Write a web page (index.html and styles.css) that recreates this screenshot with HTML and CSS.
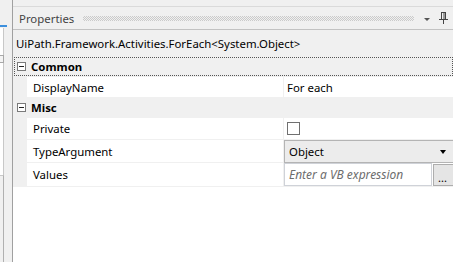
FILE: index.html
```html
<!DOCTYPE html>
<html>
<head>
    <title>Properties</title>
    <meta charset="UTF-8">
    <link rel="stylesheet" href="styles.css">
</head>
<body>
    <div class="side">
        <div class="side-tab"></div>
        <div class="side-doc"><div class="side-box"></div></div>
        <div class="side-rest"></div>
    </div>
    <div class="panel">
        <div class="titlebar">
            <span class="title">Properties</span>
            <span class="grip"></span>
            <span class="menu-arrow"></span>
            <svg class="pin" width="9" height="12" viewBox="0 0 9 12">
                <rect x="2.5" y="0.5" width="4" height="7" fill="none" stroke="#444"/>
                <line x1="0" y1="7.5" x2="9" y2="7.5" stroke="#444"/>
                <line x1="4.5" y1="8" x2="4.5" y2="12" stroke="#444"/>
                <line x1="5" y1="1" x2="5" y2="7" stroke="#444"/>
            </svg>
        </div>
        <div class="header">UiPath.Framework.Activities.ForEach&lt;System.Object&gt;</div>
        <div class="grid">
            <div class="group focused"><span class="toggle"></span>Common</div>
            <div class="row row-display">
                <div class="indent"></div>
                <div class="name">DisplayName</div>
                <div class="value">For each</div>
            </div>
            <div class="group"><span class="toggle"></span>Misc</div>
            <div class="row row-private">
                <div class="indent"></div>
                <div class="name">Private</div>
                <div class="value"><span class="checkbox"></span></div>
            </div>
            <div class="row row-type">
                <div class="indent"></div>
                <div class="name">TypeArgument</div>
                <div class="value editor">
                    <div class="combo"><span>Object</span><span class="combo-arrow"></span></div>
                </div>
            </div>
            <div class="row row-values">
                <div class="indent"></div>
                <div class="name">Values</div>
                <div class="value editor">
                    <div class="expr">Enter a VB expression</div>
                    <div class="dots">...</div>
                </div>
            </div>
        </div>
    </div>
</body>
</html>
```

FILE: styles.css
```css
/* painel de propriedades */
body {
    margin: 0;
    height: 262px;
    display: flex;
    overflow: hidden;
    background-color: #f0f0f0;
    font-family: "Noto Sans", "Open Sans", sans-serif;
    font-size: 11.4px;
    color: #000;
}
.side {
    width: 12px;
    flex: none;
    border-right: 1px solid #a0a0a0;
    display: flex;
    flex-direction: column;
}
.side-tab {
    margin-top: 25px;
    width: 7px;
    height: 2px;
    background-color: #3c8fdd;
}
.side-doc {
    margin-top: 1px;
    width: 3px;
    height: 120px;
    background-color: #fff;
    border-right: 1px solid #c8c8c8;
    padding-top: 27px;
}
.side-box {
    width: 3px;
    height: 6px;
    border: 1px solid #a8a8a8;
    border-left: none;
    background-color: #f4f4f4;
}
.side-rest {
    flex: 1;
    width: 3px;
    border-top: 1px solid #c8c8c8;
    border-right: 1px solid #b0b0b0;
}
.panel {
    flex: 1;
    min-width: 0;
    display: flex;
    flex-direction: column;
}
.titlebar {
    margin-top: 6px;
    height: 22px;
    border-top: 1px solid #dadada;
    border-bottom: 1px solid #c2c2c2;
    display: flex;
    align-items: center;
    padding: 0 5px 0 6px;
    color: #444;
}
.grip {
    flex: 1;
    height: 5px;
    margin: 0 10px 0 9px;
    background: repeating-conic-gradient(#cacaca 0 25%, transparent 0 50%) 0 0 / 2px 2px;
}
.menu-arrow {
    width: 0;
    height: 0;
    margin-top: 3px;
    border-top: 3px solid #555;
    border-left: 3px solid transparent;
    border-right: 3px solid transparent;
    margin-right: 9px;
}
.header {
    height: 26px;
    padding-left: 3px;
    display: flex;
    align-items: center;
}
.grid {
    flex: 1;
    background-color: #fff;
}
.group {
    position: relative;
    height: 21px;
    display: flex;
    align-items: center;
    font-weight: bold;
    background-color: #f0f0f0;
}
.focused::after {
    content: "";
    position: absolute;
    top: 1px;
    bottom: 1px;
    left: 1px;
    right: 0;
    border: 1px dotted #555;
}
.toggle {
    position: relative;
    width: 9px;
    height: 9px;
    box-sizing: border-box;
    border: 1px solid #7a7a7a;
    background-color: #fff;
    margin: 0 5px 0 4px;
}
.toggle::before {
    content: "";
    position: absolute;
    top: 3px;
    left: 1px;
    width: 5px;
    height: 1px;
    background-color: #222;
}
.row {
    display: flex;
    height: 22px;
}
.row-display { height: 20px; }
.row-type { height: 23px; }
.row-values { height: 24px; }
.indent {
    width: 14px;
    background-color: #f0f0f0;
}
.name, .value {
    box-sizing: border-box;
    display: flex;
    align-items: center;
    border-bottom: 1px solid #f0f0f0;
}
.row-display .name, .row-display .value {
    border-bottom: none;
}
.name {
    width: 257px;
    padding-left: 6px;
    border-right: 1px solid #f0f0f0;
}
.value {
    flex: 1;
    padding-left: 3px;
    min-width: 0;
}
.value.editor {
    padding-left: 0;
    align-items: stretch;
}
.checkbox {
    width: 13px;
    height: 13px;
    box-sizing: border-box;
    border: 1px solid #707070;
    background-color: #fff;
}
.row-type .value {
    border-bottom: none;
}
.combo {
    flex: 1;
    display: flex;
    align-items: center;
    justify-content: space-between;
    padding: 0 7px 0 4px;
    background-color: #ececec;
    border: 1px solid #b4b4b4;
    border-right: none;
}
.combo-arrow {
    width: 0;
    height: 0;
    border-top: 4px solid #000;
    border-left: 3.5px solid transparent;
    border-right: 3.5px solid transparent;
}
.expr {
    flex: 1;
    display: flex;
    align-items: center;
    padding-left: 4px;
    border: 1px solid #cfd2d8;
    color: #6d6d6d;
    font-style: italic;
    font-size: 12px;
}
.dots {
    width: 20px;
    margin: 1px 0 0 1px;
    box-sizing: border-box;
    border: 1px solid #adadad;
    border-right: none;
    background-color: #e5e5e5;
    font-size: 11px;
    line-height: 14px;
    padding-left: 4px;
    display: flex;
    align-items: flex-end;
}
```
